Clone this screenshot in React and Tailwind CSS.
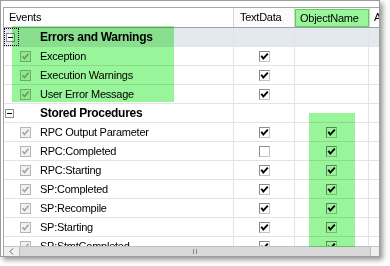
import React from 'react';

const rows = [
  { type: 'cat', name: 'Errors and Warnings', selected: true },
  { name: 'Exception', text: true, obj: null },
  { name: 'Execution Warnings', text: true, obj: null },
  { name: 'User Error Message', text: true, obj: null },
  { type: 'cat', name: 'Stored Procedures' },
  { name: 'RPC Output Parameter', text: true, obj: true },
  { name: 'RPC:Completed', text: false, obj: true },
  { name: 'RPC:Starting', text: true, obj: true },
  { name: 'SP:Completed', text: true, obj: true },
  { name: 'SP:Recompile', text: true, obj: true },
  { name: 'SP:Starting', text: true, obj: true },
  { name: 'SP:StmtCompleted', text: true, obj: true },
];

function Check({ checked, disabled }) {
  if (disabled) {
    return (
      <div className="w-[11px] h-[11px] border border-[#b4b4b4] bg-[#f2f2f2] flex items-center justify-center">
        <svg width="9" height="9" viewBox="0 0 9 9">
          <polyline points="1.5,4.2 3.5,6.5 7.5,1.8" fill="none" stroke="#a3a3a3" strokeWidth="1.6" />
        </svg>
      </div>
    );
  }
  return (
    <div className="w-[11px] h-[11px] border border-[#8c8c8c] border-r-[#c4c4c4] border-b-[#c4c4c4] bg-white flex items-center justify-center">
      {checked && (
        <svg width="9" height="9" viewBox="0 0 9 9">
          <polyline points="1.3,3.8 3.3,6.6 7.8,1.6" fill="none" stroke="#000" strokeWidth="1.9" />
        </svg>
      )}
    </div>
  );
}

function Expander() {
  return (
    <div className="w-[9px] h-[9px] border border-[#8f8f8f] bg-white flex items-center justify-center">
      <div className="w-[5px] h-px bg-black" />
    </div>
  );
}

function Row({ row }) {
  const isCat = row.type === 'cat';
  return (
    <div className={`flex h-[19px] border-b border-[#e4e4e4] ${row.selected ? 'bg-[#e4e9ef]' : ''}`}>
      <div className="w-[230px] flex items-center border-r border-[#e4e4e4]">
        <div className="w-[16px] h-full flex items-center">
          {isCat && (
            <div className={`w-[15px] h-full flex items-center pl-px ${row.selected ? 'border border-dotted border-black' : ''}`}>
              <Expander />
            </div>
          )}
        </div>
        <div className="w-[20px] flex items-center">
          {!isCat && <Check checked disabled />}
        </div>
        {isCat ? (
          <span className="font-bold text-[12px] tracking-[-0.3px] whitespace-nowrap">{row.name}</span>
        ) : (
          <span className="text-[11px] tracking-[-0.25px] whitespace-nowrap">{row.name}</span>
        )}
      </div>
      <div className="w-[61px] flex items-center justify-center border-r border-[#e4e4e4]">
        {!isCat && <Check checked={row.text} />}
      </div>
      <div className="w-[74px] flex items-center justify-center border-r border-[#e4e4e4]">
        {!isCat && row.obj && <Check checked />}
      </div>
      <div className="flex-1" />
    </div>
  );
}

export default function App() {
  return (
    <div
      className="w-[390px] h-[266px] bg-white relative overflow-hidden text-black"
      style={{ fontFamily: '"Liberation Sans", Arial, sans-serif' }}
    >
      <div className="w-[380px] h-[257px] border border-[#9c9c9c] bg-white shadow-[3px_3px_5px_rgba(0,0,0,0.4)] pt-[6px] pl-[2px] flex flex-col overflow-hidden">
        <div className="flex-1 border-l border-t border-[#a6a6a6] flex flex-col overflow-hidden">
          {/* Header */}
          <div className="flex h-[20px] border-b border-[#a0a0a0] text-[11px] tracking-[-0.25px]">
            <div className="w-[230px] flex items-center pl-[5px] border-r border-[#d5d5d5]">Events</div>
            <div className="w-[61px] flex items-center pl-[6px] border-r border-[#d5d5d5] bg-[#fbfbfb]">TextData</div>
            <div className="w-[74px] flex flex-col">
              <div className="h-[2px]" />
              <div className="flex-1 flex items-center pl-[4px] bg-[#99f599] border border-[#5fcd5f]">ObjectName</div>
            </div>
            <div className="flex-1 min-w-0 w-0 flex items-center pl-[4px] border-l border-[#d5d5d5] overflow-hidden">
              <span className="whitespace-nowrap">A</span>
            </div>
          </div>
          {/* Body */}
          <div className="flex-1 overflow-hidden">
            {rows.map((row) => (
              <Row key={row.name} row={row} />
            ))}
          </div>
          {/* Horizontal scrollbar */}
          <div className="h-[10px] flex border-t border-[#c2c2c2] shrink-0">
            <div className="w-[16px] bg-[#f0f0f0] border-r border-[#bcbcbc] flex items-center justify-center">
              <svg width="5" height="7" viewBox="0 0 5 7">
                <polyline points="4,0.5 1,3.5 4,6.5" fill="none" stroke="#606060" strokeWidth="1" />
              </svg>
            </div>
            <div className="flex-1 bg-[#d8d8d8] flex items-center justify-center gap-[2px]">
              <div className="w-px h-[5px] bg-[#8a8a8a]" />
              <div className="w-px h-[5px] bg-[#8a8a8a]" />
            </div>
            <div className="w-[9px] bg-[#f0f0f0] border-l border-[#bcbcbc]" />
          </div>
        </div>
      </div>

      {/* Highlight annotations */}
      <div className="absolute left-[12px] top-[26px] w-[162px] h-[76px] bg-[#99f599] mix-blend-multiply" />
      <div className="absolute left-[309px] top-[113px] w-[46px] h-[134px] bg-[#99f599] mix-blend-multiply" />
    </div>
  );
}
